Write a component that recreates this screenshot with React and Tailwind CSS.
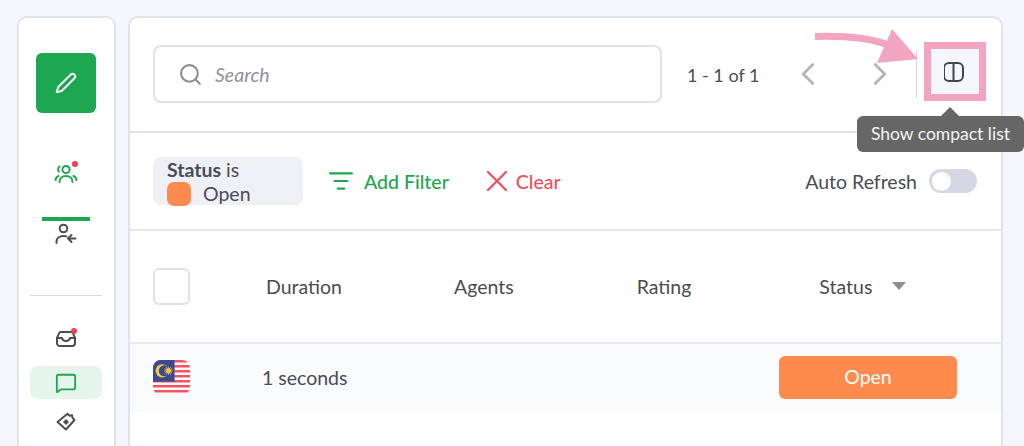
import React from "react";
import { Pen, Search, ChevronLeft, ChevronRight, X, ListFilter, MessageSquare } from "lucide-react";

const font = { fontFamily: "Lato, sans-serif" };

function AgentsIcon() {
  return (
    <svg width="26" height="24" viewBox="0 0 26 24" fill="none" stroke="#1ca750" strokeWidth="2" strokeLinecap="round">
      <circle cx="13" cy="8.500" r="3.600" />
      <path d="M6.500 21c0-3.500 2.500-6 6.500-6s6.500 2.500 6.500 6" />
      <path d="M6.500 5.500c-1.500 1-2 3.500-.5 5" />
      <path d="M2.500 19c.3-2 1.500-3.500 3-4" />
      <path d="M23.500 19c-.3-2-1.500-3.500-3-4" />
    </svg>
  );
}

function TransferIcon() {
  return (
    <svg width="26" height="24" viewBox="0 0 26 24" fill="none" stroke="#4a4d55" strokeWidth="2" strokeLinecap="round" strokeLinejoin="round">
      <circle cx="10.500" cy="6.500" r="3.800" />
      <path d="M3.500 21v-1.500c0-3.500 3-5.500 7-5.500 1 0 2 .1 3 .4" />
      <path d="M22.500 16.500h-7M18.500 13l-3.500 3.500 3.500 3.500" />
    </svg>
  );
}

function InboxIcon() {
  return (
    <svg width="20" height="18" viewBox="0 0 20 18" fill="none" stroke="#4a4d55" strokeWidth="2" strokeLinecap="round" strokeLinejoin="round">
      <path d="M5 2h10c1 0 1.700.5 2 1.400l2 4.600v5c0 1.600-1.200 3-2.800 3H3.800C2.200 16 1 14.600 1 13V8l2-4.600C3.300 2.500 4 2 5 2z" />
      <path d="M1.500 8h4.500c.5 2 1.800 3 4 3s3.500-1 4-3h4.500" />
    </svg>
  );
}

function TicketIcon() {
  return (
    <svg width="20" height="20" viewBox="0 0 20 20" fill="none" stroke="#4a4d55" strokeWidth="2" strokeLinejoin="round">
      <path d="M11.500 1.800l2 2 2.500-.5.500 2.500 2 2.200-8.500 9.500-8.500-7.500z" />
      <path d="M10 7.500l2.500 2.500-2.500 2.500-2.500-2.500z" fill="#4a4d55" strokeWidth="1" />
    </svg>
  );
}

function CompactIcon() {
  return (
    <svg width="22" height="22" viewBox="0 0 22 22" fill="none" stroke="#43464e" strokeWidth="2">
      <rect x="0" y="2" width="19" height="18" rx="5" />
      <path d="M9.500 2v18" />
    </svg>
  );
}

function MalaysiaFlag() {
  const stripes = [0, 1, 2, 3, 4, 5, 6];
  const rays = [0, 30, 60, 90, 120, 150];
  return (
    <svg width="37" height="35" viewBox="0 0 36 34" className="rounded-[8px]">
      <rect width="36" height="34" fill="#fff" />
      {stripes.map((i) => (
        <rect key={i} y={i * 4.860} width="36" height="2.430" fill="#f7525f" />
      ))}
      <rect width="21" height="21" fill="#3b4a8f" />
      <circle cx="9" cy="10.500" r="6.500" fill="#f5c93f" />
      <circle cx="11" cy="10.500" r="5.400" fill="#3b4a8f" />
      <circle cx="15" cy="10.500" r="2.400" fill="#f5c93f" />
      {rays.map((r) => (
        <path key={r} d="M15 6.300v8.400" stroke="#f5c93f" strokeWidth="0.700" transform={`rotate(${r} 15 10.500)`} />
      ))}
    </svg>
  );
}

function Arrow() {
  return (
    <svg width="112" height="56" viewBox="0 0 112 56" className="absolute left-[812px] top-[28px] z-20">
      <path d="M3 8.500C36 7.500 58 10 76 17" fill="none" stroke="#f2a5c1" strokeWidth="7" />
      <path d="M80 1L106 31L65 35z" fill="#f2a5c1" />
    </svg>
  );
}

function Tooltip() {
  return (
    <div className="absolute left-[857px] top-[116px] z-20 w-[167px] h-[36px] rounded-[6px] bg-[#666666] flex items-center justify-center text-[17.500px] text-[#f4f4f4]">
      <span className="absolute -top-[9px] left-[84px] w-0 h-0 border-x-[9px] border-x-transparent border-b-[9px] border-b-[#666666]" />
      Show compact list
    </div>
  );
}

function Sidebar() {
  return (
    <aside className="w-[99px] h-[446px] shrink-0 bg-white border-2 border-b-0 border-[#e0e2ee] rounded-t-[10px] flex flex-col items-center pt-[35px] pr-[2px]">
      <button className="w-[60px] h-[60px] shrink-0 rounded-[6px] bg-[#1ca750] flex items-center justify-center">
        <Pen size={22} color="#fff" strokeWidth={2.200} />
      </button>
      <div className="relative mt-[48px] h-[24px] shrink-0">
        <AgentsIcon />
        <span className="absolute top-0 right-[1px] w-[6px] h-[6px] rounded-full bg-[#f0414f]" />
      </div>
      <div className="mt-[32px] w-[48px] h-[4px] shrink-0 bg-[#1ca750]" />
      <div className="mt-[1px] h-[24px] shrink-0"><TransferIcon /></div>
      <div className="mt-[49px] w-[72px] h-[1px] shrink-0 bg-[#d8dae3]" />
      <div className="relative mt-[34px] h-[18px] shrink-0">
        <InboxIcon />
        <span className="absolute -top-[2px] -right-[1px] w-[6px] h-[6px] rounded-full bg-[#f0414f]" />
      </div>
      <div className="mt-[18px] w-[72px] h-[33px] shrink-0 rounded-[8px] bg-[#e6f5eb] flex items-center justify-center">
        <MessageSquare size={22} color="#1ca750" strokeWidth={2} />
      </div>
      <div className="mt-[13px] h-[20px] shrink-0"><TicketIcon /></div>
    </aside>
  );
}

function SearchBar() {
  return (
    <div className="h-[115px] border-b-2 border-[#dfe1ee] flex items-start pt-[27px] pl-[23px]">
      <div className="w-[509px] h-[58px] rounded-[8px] border-2 border-[#dfe1ee] flex items-center pl-[23px] gap-[12px]">
        <Search size={25} color="#8b8d97" strokeWidth={2} />
        <span className="mt-[1px] text-[19.500px] italic text-[#8f919c]">Search</span>
      </div>
      <span className="ml-[25px] mt-[18px] text-[18px] leading-[24px] text-[#4a4c54] whitespace-nowrap">1 - 1 of 1</span>
      <ChevronLeft size={38} color="#b1b3bd" strokeWidth={1.700} className="ml-[30px] mt-[10px]" />
      <ChevronRight size={38} color="#b1b3bd" strokeWidth={1.700} className="ml-[34px] mt-[10px]" />
      <div className="ml-[17px] mt-[5px] w-[1px] h-[48px] bg-[#d3d5e0]" />
      <div className="ml-[7px] -mt-[3px] w-[62px] h-[59px] border-[7px] border-[#f2a5c1] bg-[#f5f6f9] flex items-center justify-center">
        <CompactIcon />
      </div>
    </div>
  );
}

function FilterBar() {
  return (
    <div className="h-[98px] border-b-2 border-[#e5e7ef] flex items-center pl-[23px] pr-[24px] text-[19.500px]">
      <div className="w-[150px] h-[48px] rounded-[8px] bg-[#eff0f5] pl-[14px] leading-[24px] text-[#4a4c54]">
        <div className="h-[24px] pt-[1px]"><span className="font-bold">Status</span> is</div>
        <div className="flex items-center gap-[12px]">
          <span className="w-[24px] h-[24px] rounded-[7px] bg-[#ff8a4d]" />
          <span className="mt-[1px]">Open</span>
        </div>
      </div>
      <ListFilter size={26} color="#1ca750" strokeWidth={2} className="ml-[25px]" />
      <span className="ml-[10px] mt-[1px] font-medium text-[#1ca750]">Add Filter</span>
      <X size={36} color="#f0505c" strokeWidth={1.500} className="ml-[30px]" />
      <span className="ml-[1px] mt-[1px] font-medium text-[#f0505c]">Clear</span>
      <span className="ml-auto mt-[1px] text-[#4a4c54]">Auto Refresh</span>
      <div className="ml-[12px] w-[48px] h-[24px] rounded-full bg-[#d5d8e4] flex items-center pl-[3px]">
        <span className="w-[19px] h-[19px] rounded-full bg-white" />
      </div>
    </div>
  );
}

function TableHeader() {
  return (
    <div className="h-[113px] border-b-2 border-[#e9eaf1] flex items-center pl-[23px] text-[19.500px] text-[#4a4c54]">
      <span className="w-[37px] h-[37px] rounded-[6px] border-2 border-[#dfe1ee] bg-white" />
      <span className="ml-[76px]">Duration</span>
      <span className="ml-[112px]">Agents</span>
      <span className="ml-[123px]">Rating</span>
      <span className="ml-[128px]">Status</span>
      <span className="ml-[20px] -mt-[1px] w-0 h-0 border-x-[7px] border-x-transparent border-t-[8px] border-t-[#8b8d97]" />
    </div>
  );
}

function TableRow() {
  return (
    <div className="h-[68px] bg-[#f9fafc] flex items-center pl-[23px] text-[19.500px] text-[#4a4c54]">
      <div className="-mt-[1px] h-[35px]"><MalaysiaFlag /></div>
      <span className="ml-[72px] w-[85px] whitespace-nowrap">1 seconds</span>
      <div className="ml-[432px] -mt-[2px] w-[178px] h-[43px] rounded-[6px] bg-[#ff8a4d] text-white flex items-center justify-center">Open</div>
    </div>
  );
}

export default function App() {
  return (
    <div className="relative w-[1024px] h-[446px] overflow-hidden bg-[#f5f6f9] flex gap-[12px] pt-[16px] pl-[17px]" style={font}>
      <Sidebar />
      <main className="w-[875px] h-[430px] shrink-0 bg-white border-2 border-b-0 border-[#e0e2ee] rounded-t-[10px]">
        <SearchBar />
        <FilterBar />
        <TableHeader />
        <TableRow />
      </main>
      <Arrow />
      <Tooltip />
    </div>
  );
}
